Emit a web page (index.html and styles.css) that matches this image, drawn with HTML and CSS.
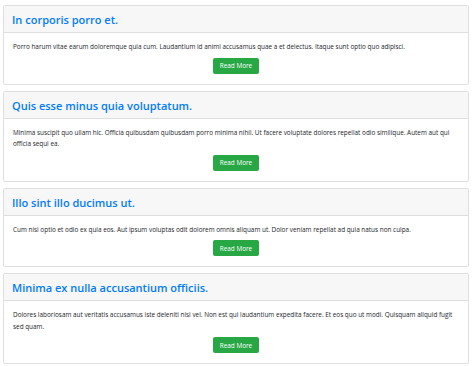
FILE: index.html
```html
<!DOCTYPE html>
<html lang="en">
<head>
    <meta charset="UTF-8">
    <meta name="viewport" content="width=device-width, initial-scale=1.0">
    <title>Posts</title>
    <link rel="stylesheet" href="styles.css">
</head>
<body>

    <div class="post-list">
        <div class="card">
            <div class="card-header">
                <h3 class="card-title">In corporis porro et.</h3>
            </div>
            <div class="card-body">
                <p>Porro harum vitae earum doloremque quia cum. Laudantium id animi accusamus quae a et delectus. Itaque sunt optio quo adipisci.</p>
                <button type="button">Read More</button>
            </div>
        </div>

        <div class="card">
            <div class="card-header">
                <h3 class="card-title">Quis esse minus quia voluptatum.</h3>
            </div>
            <div class="card-body">
                <p>Minima suscipit quo ullam hic. Officia quibusdam quibusdam porro minima nihil. Ut facere voluptate dolores repellat odio similique. Autem aut qui officia sequi ea.</p>
                <button type="button">Read More</button>
            </div>
        </div>

        <div class="card">
            <div class="card-header">
                <h3 class="card-title">Illo sint illo ducimus ut.</h3>
            </div>
            <div class="card-body">
                <p>Cum nisi optio et odio ex quia eos. Aut ipsum voluptas odit dolorem omnis aliquam ut. Dolor veniam repellat ad quia natus non culpa.</p>
                <button type="button">Read More</button>
            </div>
        </div>

        <div class="card">
            <div class="card-header">
                <h3 class="card-title">Minima ex nulla accusantium officiis.</h3>
            </div>
            <div class="card-body">
                <p>Dolores laboriosam aut veritatis accusamus iste deleniti nisi vel. Non est qui laudantium expedita facere. Et eos quo ut modi. Quisquam aliquid fugit sed quam.</p>
                <button type="button">Read More</button>
            </div>
        </div>
    </div>

</body>
</html>
```

FILE: styles.css
```css
body {
    font-family: "Open Sans", "Noto Sans", sans-serif;
    margin: 5px 5px 0 3px;
    color: #212529;
}

.post-list {
    display: flex;
    flex-direction: column;
    gap: 6px;
}

.card {
    border: 1px solid #dfdfdf;
    border-radius: 2px;
    background-color: #fff;
}

.card-header {
    background-color: #f7f7f7;
    border-bottom: 1px solid #dfdfdf;
    padding: 6px 8px 5px 8px;
}

.card-title {
    margin: 0;
    font-size: 11px;
    font-weight: 600;
    line-height: 15px;
    color: #007bff;
}

.card-body {
    padding: 8px 9px 10px 9px;
    display: flex;
    flex-direction: column;
    align-items: center;
}

.card-body p {
    align-self: stretch;
    margin: 0 0 5px 0;
    font-size: 6.4px;
    line-height: 11.5px;
}

.card-body button {
    height: 16px;
    padding: 0 7px;
    background-color: #28a745;
    color: white;
    border: none;
    border-radius: 2px;
    font-family: inherit;
    font-size: 6.4px;
    cursor: pointer;
}
```
